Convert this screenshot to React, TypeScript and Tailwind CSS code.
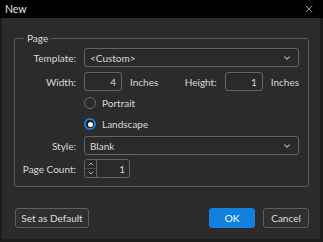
import { ChevronDown, ChevronUp, X } from 'lucide-react'

const font = { fontFamily: 'Lato, "Liberation Sans", sans-serif' }

function Row({ label, className, children }: { label?: string; className?: string; children: React.ReactNode }) {
  return (
    <div className={`flex items-center ${className ?? ''}`}>
      <div className="w-[61px] shrink-0 text-right">{label}</div>
      <div className="ml-[8px] flex flex-1 items-center h-full">{children}</div>
    </div>
  )
}

function Select({ value }: { value: string }) {
  return (
    <div className="flex h-full flex-1 items-center justify-between rounded-[3px] border border-[#646464] bg-[#2a2a2a] pl-[5px] pr-[6px]">
      <span>{value}</span>
      <ChevronDown size={10} strokeWidth={2.5} className="text-[#cfcfcf]" />
    </div>
  )
}

function NumBox({ value }: { value: string }) {
  return (
    <div className="flex h-full w-[38px] items-center justify-end rounded-[3px] border border-[#646464] bg-[#2a2a2a] pr-[5px]">
      {value}
    </div>
  )
}

function Radio({ label, checked }: { label: string; checked?: boolean }) {
  return (
    <div className="flex items-center">
      {checked ? (
        <div className="flex h-[12px] w-[12px] items-center justify-center rounded-full border-[2px] border-[#1f7ad0] bg-[#1b1b1b]">
          <div className="h-[5px] w-[5px] rounded-full bg-white" />
        </div>
      ) : (
        <div className="h-[12px] w-[12px] rounded-full border-[1.5px] border-[#6a6a6a]" />
      )}
      <span className="ml-[6px]">{label}</span>
    </div>
  )
}

export default function App() {
  return (
    <div style={font} className="flex h-[242px] w-[323px] flex-col bg-[#1c1c1c] text-[10px] leading-[12px] text-[#d9d9d9]">
      <div className="flex h-[18px] shrink-0 items-center justify-between bg-black pl-[5px] pr-[8px] text-[#e6e6e6]">
        <span className="text-[10.5px]">New</span>
        <X size={12} strokeWidth={1.3} />
      </div>

      <div className="mb-[3px] ml-[2px] mr-[3px] flex flex-1 flex-col bg-[#2b2b2b] pl-[12px] pr-[11px]">
        <fieldset className="mt-[14px] rounded-[3px] border border-[#5b5b5b] pb-[8px] pr-[9px] pt-[4px]">
          <legend className="ml-[9px] px-[3px] leading-[12px]">Page</legend>

          <Row label="Template:" className="h-[19px]">
            <Select value="<Custom>" />
          </Row>

          <Row label="Width:" className="mt-[5px] h-[19px]">
            <NumBox value="4" />
            <span className="ml-[8px]">Inches</span>
            <span className="flex-1 text-right">Height:</span>
            <span className="ml-[8px] flex h-full"><NumBox value="1" /></span>
            <span className="ml-[8px]">Inches</span>
          </Row>

          <Row className="mt-[2px] h-[20px]">
            <Radio label="Portrait" />
          </Row>
          <Row className="mt-[1px] h-[20px]">
            <Radio label="Landscape" checked />
          </Row>

          <Row label="Style:" className="mt-[2px] h-[19px]">
            <Select value="Blank" />
          </Row>

          <Row label="Page Count:" className="mt-[4px] h-[19px]">
            <div className="flex h-full w-[46px] rounded-[3px] border border-[#646464] bg-[#2a2a2a]">
              <div className="flex w-[12px] flex-col border-r border-[#646464] text-[#cfcfcf]">
                <div className="flex flex-1 items-center justify-center border-b border-[#4a4a4a]">
                  <ChevronUp size={8} strokeWidth={2.5} />
                </div>
                <div className="flex flex-1 items-center justify-center">
                  <ChevronDown size={8} strokeWidth={2.5} />
                </div>
              </div>
              <div className="flex flex-1 items-center justify-end pr-[4px]">1</div>
            </div>
          </Row>
        </fieldset>

        <div className="mt-[21px] flex items-center">
          <button className="ml-[1px] h-[20px] w-[74px] rounded-[3px] border border-[#5e5e5e] bg-[#303030] text-[#dedede]">
            Set as Default
          </button>
          <div className="flex-1" />
          <button className="h-[20px] w-[46px] rounded-[3px] border border-[#1a82dc] bg-[#0f80dc] text-white">OK</button>
          <button className="ml-[8px] h-[20px] w-[46px] rounded-[3px] border border-[#5e5e5e] bg-[#303030] text-[#dedede]">
            Cancel
          </button>
        </div>
      </div>
    </div>
  )
}
